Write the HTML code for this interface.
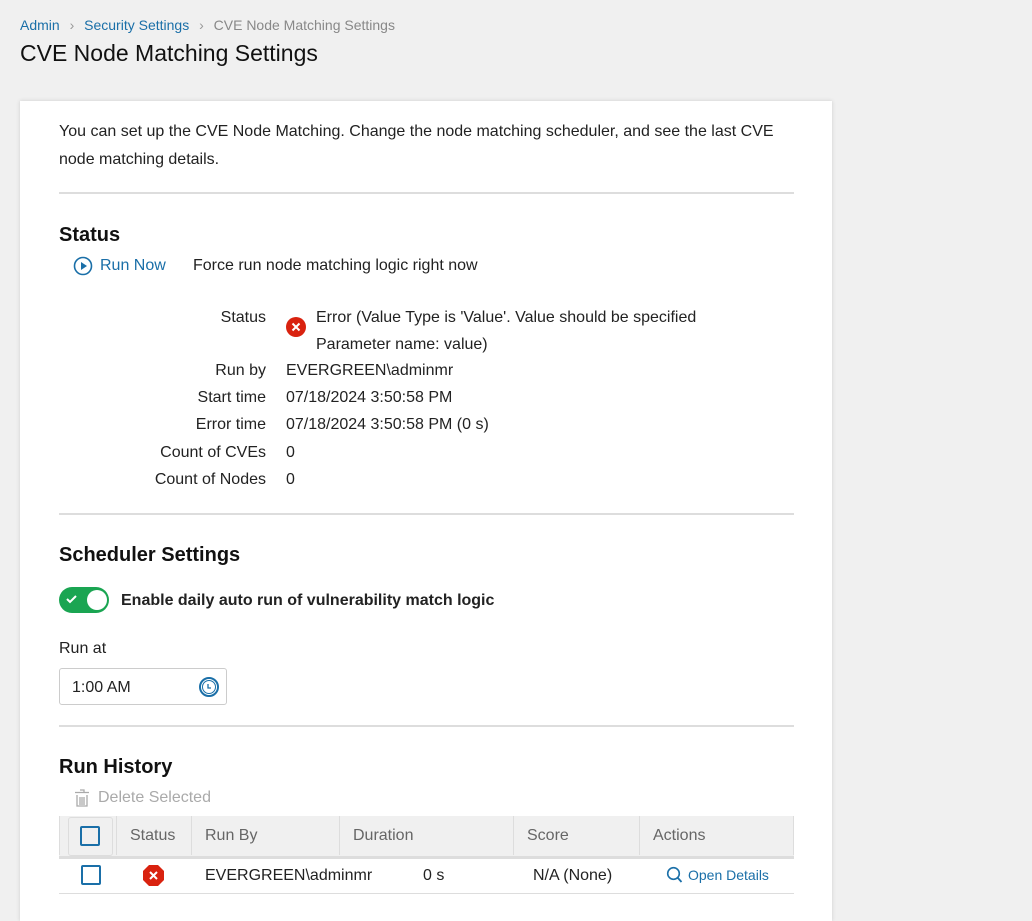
<!DOCTYPE html>
<html><head><meta charset="utf-8"><style>
body{margin:0;width:1032px;height:901px;background:#f0f0f0;font-family:"Liberation Sans",sans-serif;color:#222;position:relative;overflow:hidden}
.a{position:absolute;white-space:nowrap}
.card{position:absolute;left:20px;top:101px;width:812px;height:820px;background:#fff;box-shadow:0 0 4px rgba(0,0,0,.15)}
.hr{position:absolute;left:59px;width:735px;height:2px;background:#ddd}
h2{margin:0;font-size:20px;font-weight:bold;position:absolute;color:#111}
.lbl{position:absolute;right:766px;font-size:16px;color:#222;text-align:right}
.val{position:absolute;left:286px;font-size:16px}
.th{position:absolute;top:816px;height:39px;background:#f0f0f0;border-right:1px solid #ddd;font-size:16px;color:#666;line-height:39px;box-sizing:border-box;padding-left:13px}
.cb{position:absolute;width:16px;height:16px;border:2px solid #1a6fa8;border-radius:2px}
</style></head><body>
<div class="a" style="left:20px;top:17px;font-size:14px;color:#1a6fa8">Admin <span style="color:#999;margin:0 6px">›</span> Security Settings <span style="color:#999;margin:0 6px">›</span> <span style="color:#888">CVE Node Matching Settings</span></div>
<div class="a" style="left:20px;top:40px;font-size:23px;color:#111">CVE Node Matching Settings</div>
<div class="card"></div>
<div class="a" style="left:59px;top:118px;font-size:16px;line-height:28px;white-space:normal;width:745px">You can set up the CVE Node Matching. Change the node matching scheduler, and see the last CVE node matching details.</div>
<div class="hr" style="top:192px"></div>
<h2 style="left:59px;top:224px">Status</h2>
<svg class="a" style="left:73px;top:256px" width="20" height="20"><circle cx="10" cy="10" r="8.5" fill="none" stroke="#1a6fa8" stroke-width="1.6"/><path d="M8 6v8l6-4z" fill="#1a6fa8"/></svg>
<div class="a" style="left:100px;top:257px;font-size:16px;color:#1a6fa8">Run Now</div>
<div class="a" style="left:193px;top:257px;font-size:16px">Force run node matching logic right now</div>
<div class="lbl" style="top:309px">Status</div>
<svg class="a" style="left:286px;top:317px" width="20" height="20"><circle cx="10" cy="10" r="10" fill="#d9220f"/><path d="M6.5 6.5l7 7M13.5 6.5l-7 7" stroke="#fff" stroke-width="2"/></svg>
<div class="a" style="left:316px;top:304px;font-size:16px;line-height:27px">Error (Value Type is 'Value'. Value should be specified<br>Parameter name: value)</div>
<div class="lbl" style="top:362px">Run by</div><div class="val" style="top:362px">EVERGREEN\adminmr</div>
<div class="lbl" style="top:389px">Start time</div><div class="val" style="top:389px">07/18/2024 3:50:58 PM</div>
<div class="lbl" style="top:416px">Error time</div><div class="val" style="top:416px">07/18/2024 3:50:58 PM (0 s)</div>
<div class="lbl" style="top:444px">Count of CVEs</div><div class="val" style="top:444px">0</div>
<div class="lbl" style="top:471px">Count of Nodes</div><div class="val" style="top:471px">0</div>
<div class="hr" style="top:513px"></div>
<h2 style="left:59px;top:544px">Scheduler Settings</h2>
<div class="a" style="left:59px;top:587px;width:50px;height:26px;border-radius:13px;background:#1aa552"></div>
<div class="a" style="left:87px;top:590px;width:20px;height:20px;border-radius:50%;background:#fff"></div>
<svg class="a" style="left:65px;top:593px" width="14" height="12"><path d="M2 6l3 3 6-6" fill="none" stroke="#fff" stroke-width="2"/></svg>
<div class="a" style="left:121px;top:592px;font-size:16px;font-weight:bold;color:#222">Enable daily auto run of vulnerability match logic</div>
<div class="a" style="left:59px;top:640px;font-size:16px">Run at</div>
<div class="a" style="left:59px;top:668px;width:166px;height:35px;border:1px solid #ccc;border-radius:3px"></div>
<div class="a" style="left:72px;top:679px;font-size:16px">1:00 AM</div>
<svg class="a" style="left:198px;top:676px" width="22" height="22"><circle cx="11" cy="11" r="9" fill="none" stroke="#1a6fa8" stroke-width="2"/><circle cx="11" cy="11" r="6.5" fill="none" stroke="#1a6fa8" stroke-width="1"/><path d="M10 8v4h3" fill="none" stroke="#1a6fa8" stroke-width="1.3"/></svg>
<div class="hr" style="top:725px"></div>
<h2 style="left:59px;top:756px">Run History</h2>
<svg class="a" style="left:73px;top:788px" width="18" height="20"><path d="M7 2h4v2M2 4.5h14M4 7v11h10V7M7 9v8M9 9v8M11 9v8" fill="none" stroke="#aaa" stroke-width="1.3"/></svg>
<div class="a" style="left:98px;top:789px;font-size:16px;color:#aaa">Delete Selected</div>
<div class="a" style="left:59px;top:816px;width:735px;height:39px;background:#f0f0f0;border-top:1px solid #ddd;border-bottom:3px solid #ddd;box-sizing:content-box"></div>
<div class="th" style="left:59px;width:58px;border-left:1px solid #ddd"></div>
<div class="a" style="left:68px;top:817px;width:43px;height:37px;border:1px solid #ddd;border-radius:3px"></div>
<div class="cb" style="left:80px;top:826px"></div>
<div class="th" style="left:117px;width:75px">Status</div>
<div class="th" style="left:192px;width:148px">Run By</div>
<div class="th" style="left:340px;width:174px">Duration</div>
<div class="th" style="left:514px;width:126px">Score</div>
<div class="th" style="left:640px;width:154px">Actions</div>
<div class="cb" style="left:81px;top:865px"></div>
<svg class="a" style="left:143px;top:865px" width="21" height="21"><path d="M6 0h9l6 6v9l-6 6H6l-6-6V6z" fill="#d9220f"/><path d="M7 7l7 7M14 7l-7 7" stroke="#fff" stroke-width="2"/></svg>
<div class="a" style="left:205px;top:867px;font-size:16px">EVERGREEN\adminmr</div>
<div class="a" style="left:423px;top:867px;font-size:16px">0 s</div>
<div class="a" style="left:533px;top:867px;font-size:16px">N/A (None)</div>
<svg class="a" style="left:666px;top:866px" width="17" height="18"><circle cx="7.5" cy="7.5" r="5.8" fill="none" stroke="#1a6fa8" stroke-width="1.6"/><path d="M11.5 11.5l4 4.5" stroke="#1a6fa8" stroke-width="1.8"/></svg>
<div class="a" style="left:688px;top:867px;font-size:14px;color:#1a6fa8">Open Details</div>
<div class="a" style="left:59px;top:893px;width:735px;height:1px;background:#ddd"></div>
</body></html>
